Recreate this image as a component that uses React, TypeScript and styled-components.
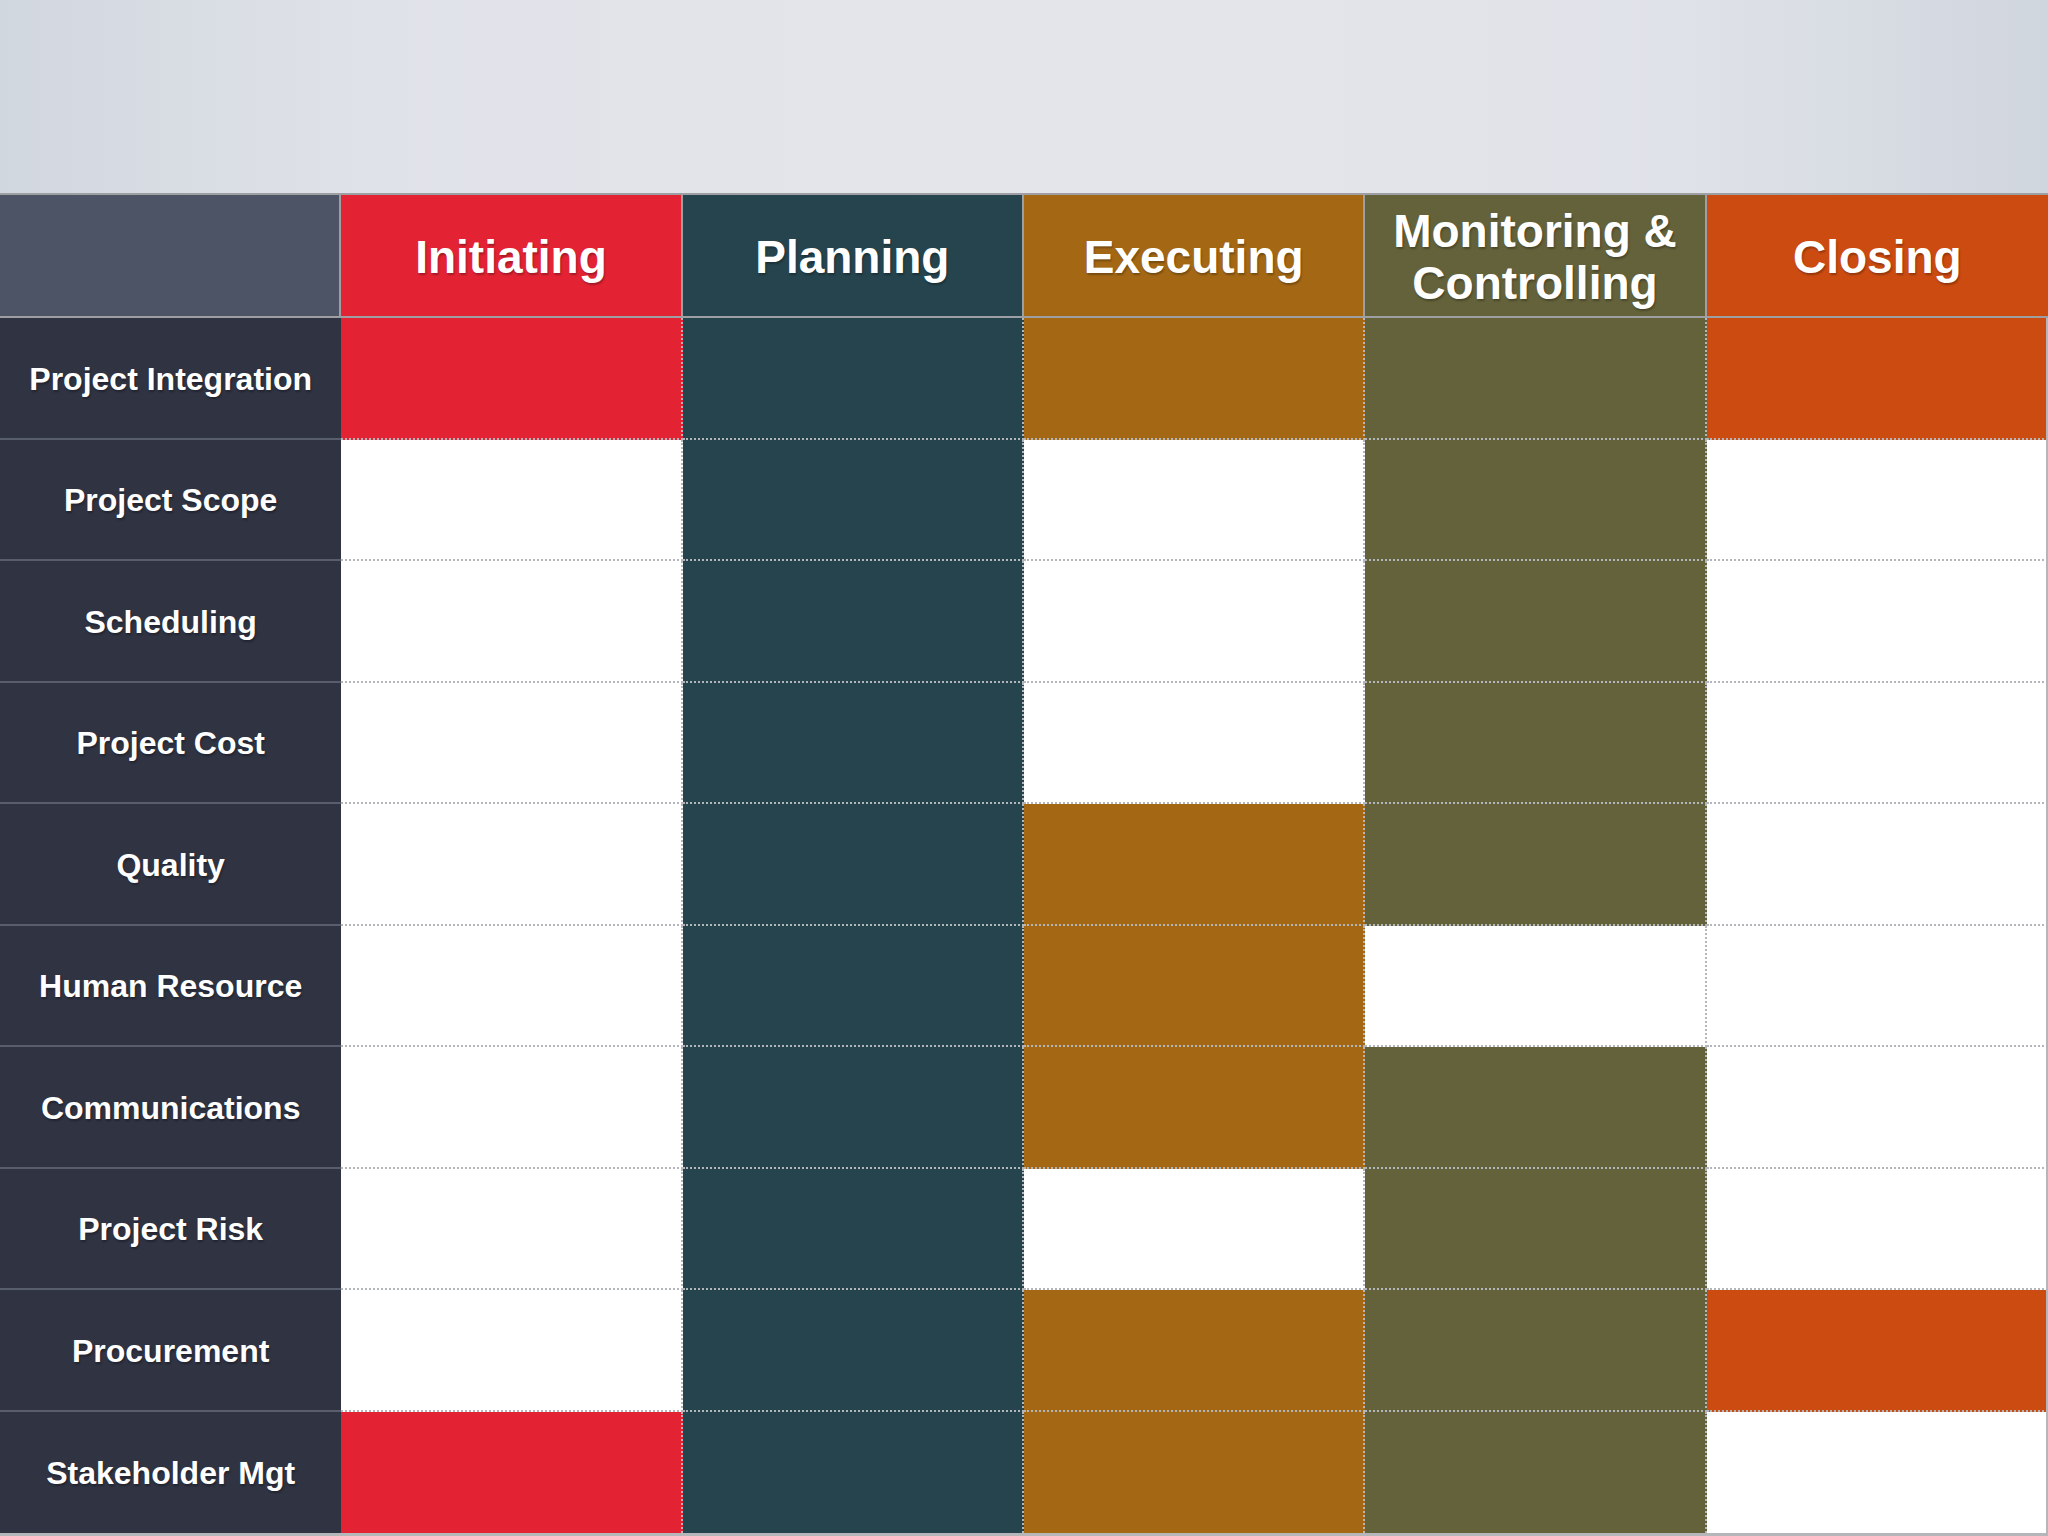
import styled, { createGlobalStyle } from 'styled-components';

const GlobalStyle = createGlobalStyle`
  html, body {
    margin: 0;
    padding: 0;
  }
  body {
    font-family: "Liberation Sans", Arial, sans-serif;
  }
`;

type Phase = 'initiating' | 'planning' | 'executing' | 'monitoring' | 'closing';

const phaseColors: Record<Phase, string> = {
  initiating: '#e32334',
  planning: '#25444d',
  executing: '#a46815',
  monitoring: '#64623a',
  closing: '#cc4b11',
};

const phases: { key: Phase; label: string[] }[] = [
  { key: 'initiating', label: ['Initiating'] },
  { key: 'planning', label: ['Planning'] },
  { key: 'executing', label: ['Executing'] },
  { key: 'monitoring', label: ['Monitoring &', 'Controlling'] },
  { key: 'closing', label: ['Closing'] },
];

// which phases each knowledge area touches
const areas: { name: string; active: Phase[] }[] = [
  { name: 'Project Integration', active: ['initiating', 'planning', 'executing', 'monitoring', 'closing'] },
  { name: 'Project Scope', active: ['planning', 'monitoring'] },
  { name: 'Scheduling', active: ['planning', 'monitoring'] },
  { name: 'Project Cost', active: ['planning', 'monitoring'] },
  { name: 'Quality', active: ['planning', 'executing', 'monitoring'] },
  { name: 'Human Resource', active: ['planning', 'executing'] },
  { name: 'Communications', active: ['planning', 'executing', 'monitoring'] },
  { name: 'Project Risk', active: ['planning', 'monitoring'] },
  { name: 'Procurement', active: ['planning', 'executing', 'monitoring', 'closing'] },
  { name: 'Stakeholder Mgt', active: ['initiating', 'planning', 'executing', 'monitoring'] },
];

const Page = styled.div`
  width: 2048px;
  height: 1536px;
  overflow: hidden;
  display: flex;
  flex-direction: column;
  background: linear-gradient(
    90deg,
    #d1d7df 0%,
    #dfe2e8 18%,
    #e4e5eb 45%,
    #e4e5ea 60%,
    #dfe2e8 82%,
    #d0d6de 100%
  );
`;

const TopBand = styled.div`
  height: 193px;
  flex-shrink: 0;
`;

const Matrix = styled.div`
  display: grid;
  grid-template-columns: repeat(6, 1fr);
  grid-template-rows: 123px repeat(10, 121.5px);
  border-top: 2px solid #9d9fa3;
  border-bottom: 3px solid #b4b6ba;
  background: #ffffff;
`;

const Text = styled.span`
  color: #ffffff;
  font-weight: 700;
  text-align: center;
  text-shadow: 1px 2px 2px rgba(0, 0, 0, 0.28);
`;

const HeaderCell = styled.div<{ $bg: string }>`
  box-sizing: border-box;
  display: flex;
  align-items: center;
  justify-content: center;
  background: ${p => p.$bg};
  border-right: 2px solid #9d9fa3;
  border-bottom: 2px solid #9d9fa3;
  &:nth-child(6) {
    border-right: none;
  }
`;

const HeaderText = styled(Text)`
  font-size: 46px;
  line-height: 52px;
  padding-top: 2px;
`;

const LabelCell = styled.div<{ $last: boolean }>`
  box-sizing: border-box;
  display: flex;
  align-items: center;
  justify-content: center;
  background: #2f3342;
  border-bottom: ${p => (p.$last ? 'none' : '2px solid #595e6c')};
  padding-top: 2px;
`;

const LabelText = styled(Text)`
  font-size: 32px;
  line-height: 38px;
`;

const DataCell = styled.div<{ $bg: string; $lastCol: boolean; $lastRow: boolean }>`
  box-sizing: border-box;
  background: ${p => p.$bg};
  border-right: ${p => (p.$lastCol ? 'none' : '2px dotted #b3b6ba')};
  border-bottom: ${p => (p.$lastRow ? 'none' : '2px dotted #b3b6ba')};
  box-shadow: ${p => (p.$lastCol ? 'inset -2px 0 0 #b4b6ba' : 'none')};
`;

function Row({ area, last }: { area: { name: string; active: Phase[] }; last: boolean }) {
  return (
    <>
      <LabelCell $last={last}>
        <LabelText>{area.name}</LabelText>
      </LabelCell>
      {phases.map((ph, c) => (
        <DataCell
          key={ph.key}
          $bg={area.active.includes(ph.key) ? phaseColors[ph.key] : '#ffffff'}
          $lastCol={c === phases.length - 1}
          $lastRow={last}
        />
      ))}
    </>
  );
}

export default function App() {
  return (
    <Page>
      <GlobalStyle />
      <TopBand />
      <Matrix>
        <HeaderCell $bg="#4d5466" />
        {phases.map(ph => (
          <HeaderCell key={ph.key} $bg={phaseColors[ph.key]}>
            <HeaderText>
              {ph.label.map((line, i) => (
                <div key={i}>{line}</div>
              ))}
            </HeaderText>
          </HeaderCell>
        ))}
        {areas.map((area, r) => (
          <Row key={area.name} area={area} last={r === areas.length - 1} />
        ))}
      </Matrix>
    </Page>
  );
}
